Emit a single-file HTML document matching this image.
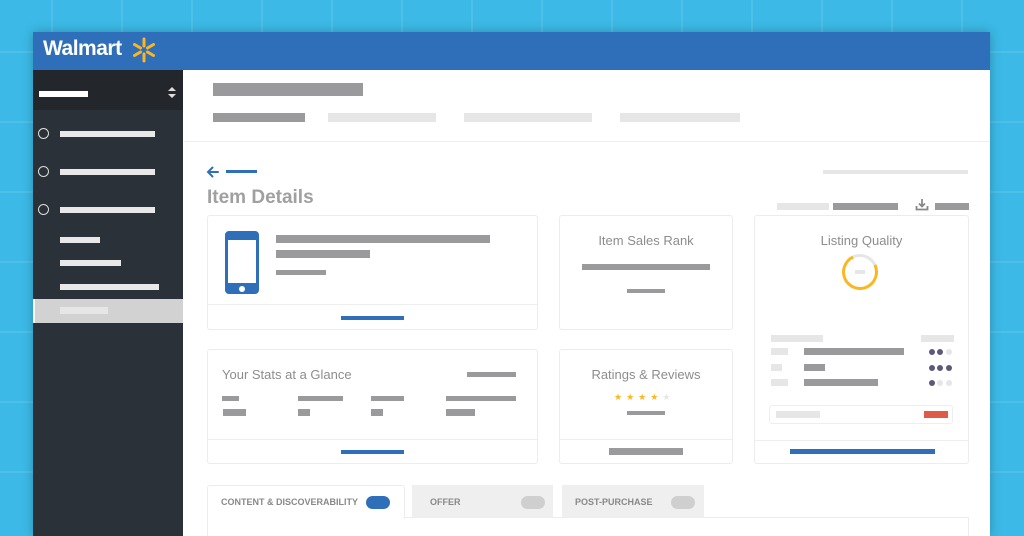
<html><head><style>
*{margin:0;padding:0;box-sizing:border-box}
body{width:1024px;height:536px;overflow:hidden;position:relative;font-family:"Liberation Sans",sans-serif;
background-color:#3cb9e6;
background-image:linear-gradient(90deg,rgba(255,255,255,.09) 2px,transparent 2px),linear-gradient(rgba(255,255,255,.09) 2px,transparent 2px);
background-size:70px 70px;background-position:51px 51px}
.a{position:absolute}
.g{position:absolute;background:#9a9a9d;height:7px}
.l{position:absolute;background:#e6e6e6;height:7px}
.w{position:absolute;background:#e8e8e8;height:6px}
.card{position:absolute;background:#fff;border:1px solid #ececec;border-radius:3px}
.t{position:absolute;color:#8d8d8f;font-size:13px;white-space:nowrap}
.d{position:absolute;width:6px;height:6px;border-radius:50%}
</style></head><body>
<div class="a" style="left:33px;top:32px;width:957px;height:504px;background:#fff;box-shadow:0 0 10px rgba(0,0,0,.25)"></div>
<div class="a" style="left:33px;top:32px;width:957px;height:38px;background:#2f6fba"></div>
<div class="a" style="left:43px;top:37px;color:#fff;font-size:21px;font-weight:bold;letter-spacing:-0.5px">Walmart</div>
<svg class="a" style="left:130px;top:36px" width="28" height="28" viewBox="-14 -14 28 28"><g stroke="#fcb620" stroke-width="3" stroke-linecap="round">
<line x1="0" y1="-4" x2="0" y2="-11"/><line x1="0" y1="4" x2="0" y2="11"/>
<line x1="3.5" y1="-2" x2="9.5" y2="-5.5"/><line x1="-3.5" y1="-2" x2="-9.5" y2="-5.5"/>
<line x1="3.5" y1="2" x2="9.5" y2="5.5"/><line x1="-3.5" y1="2" x2="-9.5" y2="5.5"/></g></svg>
<!-- sidebar -->
<div class="a" style="left:33px;top:70px;width:150px;height:466px;background:#2b3138"></div>
<div class="a" style="left:33px;top:70px;width:150px;height:40px;background:#23272b"></div>
<div class="a" style="left:39px;top:91px;width:49px;height:6px;background:#fff"></div>
<div class="a" style="left:168px;top:87px;width:0;height:0;border:4px solid transparent;border-bottom:4px solid #ddd;border-top:0"></div>
<div class="a" style="left:168px;top:94px;width:0;height:0;border:4px solid transparent;border-top:4px solid #ddd;border-bottom:0"></div>
<div class="a" style="left:38px;top:128px;width:11px;height:11px;border:1.5px solid #ddd;border-radius:50%"></div>
<div class="w" style="left:60px;top:131px;width:95px"></div>
<div class="a" style="left:38px;top:166px;width:11px;height:11px;border:1.5px solid #ddd;border-radius:50%"></div>
<div class="w" style="left:60px;top:169px;width:95px"></div>
<div class="a" style="left:38px;top:204px;width:11px;height:11px;border:1.5px solid #ddd;border-radius:50%"></div>
<div class="w" style="left:60px;top:207px;width:95px"></div>
<div class="w" style="left:60px;top:237px;width:40px"></div>
<div class="w" style="left:60px;top:260px;width:61px"></div>
<div class="w" style="left:60px;top:284px;width:99px"></div>
<div class="a" style="left:33px;top:299px;width:150px;height:24px;background:#d2d2d2;border-left:2px solid #fff"></div>
<div class="a" style="left:60px;top:307px;width:48px;height:7px;background:#e6e6e6"></div>
<!-- top -->
<div class="g" style="left:213px;top:83px;width:150px;height:13px"></div>
<div class="g" style="left:213px;top:113px;width:92px;height:9px"></div>
<div class="l" style="left:328px;top:113px;width:108px;height:9px"></div>
<div class="l" style="left:464px;top:113px;width:128px;height:9px"></div>
<div class="l" style="left:620px;top:113px;width:120px;height:9px"></div>
<div class="a" style="left:184px;top:141px;width:806px;height:1px;background:#eee"></div>
<svg class="a" style="left:206px;top:165px" width="14" height="14" viewBox="0 0 14 14"><path d="M12 7H2M6.5 2.5L2 7l4.5 4.5" stroke="#2f6fba" stroke-width="2" fill="none" stroke-linecap="round"/></svg>
<div class="a" style="left:226px;top:170px;width:31px;height:3px;background:#2f6fba"></div>
<div class="t" style="left:207px;top:187px;font-size:19px;font-weight:bold;color:#a0a0a2">Item Details</div>
<div class="l" style="left:823px;top:170px;width:145px;height:4px"></div>
<div class="l" style="left:777px;top:203px;width:52px"></div>
<div class="g" style="left:833px;top:203px;width:65px"></div>
<svg class="a" style="left:915px;top:198px" width="14" height="13" viewBox="0 0 14 13"><path d="M7 1v7M4 5.5L7 8.5 10 5.5M1.5 8v3.5h11V8" stroke="#888" stroke-width="1.8" fill="none"/></svg>
<div class="g" style="left:935px;top:203px;width:34px"></div>
<!-- card1 -->
<div class="card" style="left:207px;top:215px;width:331px;height:115px"></div>
<div class="a" style="left:208px;top:304px;width:329px;height:1px;background:#eee"></div>
<div class="a" style="left:225px;top:231px;width:34px;height:63px;border:3px solid #2f6fba;border-top-width:9px;border-bottom-width:11px;border-radius:4px;background:#fff"></div>
<div class="a" style="left:239px;top:286px;width:6px;height:6px;border-radius:50%;background:#fff"></div>
<div class="g" style="left:276px;top:235px;width:214px;height:8px"></div>
<div class="g" style="left:276px;top:250px;width:94px;height:8px"></div>
<div class="g" style="left:276px;top:270px;width:50px;height:5px"></div>
<div class="a" style="left:341px;top:316px;width:63px;height:4px;background:#2f6fba"></div>
<!-- card2 -->
<div class="card" style="left:559px;top:215px;width:174px;height:115px"></div>
<div class="t" style="left:559px;top:233px;width:174px;text-align:center">Item Sales Rank</div>
<div class="g" style="left:582px;top:264px;width:128px;height:6px"></div>
<div class="g" style="left:627px;top:289px;width:38px;height:4px"></div>
<!-- card3 -->
<div class="card" style="left:754px;top:215px;width:215px;height:249px"></div>
<div class="t" style="left:754px;top:233px;width:215px;text-align:center">Listing Quality</div>
<div class="a" style="left:842px;top:254px;width:36px;height:36px;border:3px solid #fcb620;border-top-color:#e6e6e6;border-radius:50%;transform:rotate(20deg)"></div>
<div class="l" style="left:855px;top:270px;width:10px;height:4px"></div>
<div class="l" style="left:771px;top:335px;width:52px"></div>
<div class="l" style="left:921px;top:335px;width:33px"></div>
<div class="l" style="left:771px;top:348px;width:17px"></div><div class="g" style="left:804px;top:348px;width:100px"></div>
<div class="l" style="left:771px;top:364px;width:11px"></div><div class="g" style="left:804px;top:364px;width:21px"></div>
<div class="l" style="left:771px;top:379px;width:17px"></div><div class="g" style="left:804px;top:379px;width:74px"></div>
<div class="d" style="left:929px;top:349px;background:#5c5a7a"></div><div class="d" style="left:937px;top:349px;background:#5c5a7a"></div><div class="d" style="left:946px;top:349px;background:#e6e6e6"></div>
<div class="d" style="left:929px;top:365px;background:#5c5a7a"></div><div class="d" style="left:937px;top:365px;background:#5c5a7a"></div><div class="d" style="left:946px;top:365px;background:#5c5a7a"></div>
<div class="d" style="left:929px;top:380px;background:#5c5a7a"></div><div class="d" style="left:937px;top:380px;background:#e6e6e6"></div><div class="d" style="left:946px;top:380px;background:#e6e6e6"></div>
<div class="a" style="left:769px;top:405px;width:184px;height:19px;border:1px solid #eee;border-radius:3px"></div>
<div class="l" style="left:776px;top:411px;width:44px"></div>
<div class="a" style="left:924px;top:411px;width:24px;height:7px;background:#e05a4a"></div>
<div class="a" style="left:755px;top:440px;width:213px;height:1px;background:#eee"></div>
<div class="a" style="left:790px;top:449px;width:145px;height:5px;background:#2f6fba"></div>
<!-- card4 -->
<div class="card" style="left:207px;top:349px;width:331px;height:115px"></div>
<div class="a" style="left:208px;top:439px;width:329px;height:1px;background:#eee"></div>
<div class="t" style="left:222px;top:367px">Your Stats at a Glance</div>
<div class="g" style="left:467px;top:372px;width:49px;height:5px"></div>
<div class="g" style="left:222px;top:396px;width:17px;height:5px"></div>
<div class="g" style="left:223px;top:409px;width:23px;height:7px"></div>
<div class="g" style="left:298px;top:396px;width:45px;height:5px"></div>
<div class="g" style="left:298px;top:409px;width:12px;height:7px"></div>
<div class="g" style="left:371px;top:396px;width:33px;height:5px"></div>
<div class="g" style="left:371px;top:409px;width:12px;height:7px"></div>
<div class="g" style="left:446px;top:396px;width:70px;height:5px"></div>
<div class="g" style="left:446px;top:409px;width:29px;height:7px"></div>
<div class="a" style="left:341px;top:450px;width:63px;height:4px;background:#2f6fba"></div>
<!-- card5 -->
<div class="card" style="left:559px;top:349px;width:174px;height:115px"></div>
<div class="a" style="left:560px;top:439px;width:172px;height:1px;background:#eee"></div>
<div class="t" style="left:559px;top:367px;width:174px;text-align:center">Ratings &amp; Reviews</div>
<div class="t" style="left:614px;top:392px;font-size:9px;color:#fcb620;letter-spacing:4px">★★★★<span style="color:#e6e6e6">★</span></div>
<div class="g" style="left:627px;top:411px;width:38px;height:4px"></div>
<div class="g" style="left:609px;top:448px;width:74px;height:7px"></div>
<!-- tabs -->
<div class="a" style="left:207px;top:517px;width:762px;height:19px;border:1px solid #ececec;border-bottom:0"></div>
<div class="a" style="left:207px;top:485px;width:198px;height:34px;background:#fff;border:1px solid #ececec;border-bottom:0;border-radius:3px 3px 0 0"></div>
<div class="t" style="left:221px;top:497px;font-size:9px;color:#888;font-weight:bold">CONTENT &amp; DISCOVERABILITY</div>
<div class="a" style="left:366px;top:496px;width:24px;height:13px;border-radius:7px;background:#2f6fba"></div>
<div class="a" style="left:412px;top:485px;width:141px;height:32px;background:#efefef"></div>
<div class="t" style="left:430px;top:497px;font-size:9px;color:#888;font-weight:bold">OFFER</div>
<div class="a" style="left:521px;top:496px;width:24px;height:13px;border-radius:7px;background:#cfcfcf"></div>
<div class="a" style="left:562px;top:485px;width:142px;height:32px;background:#efefef"></div>
<div class="t" style="left:575px;top:497px;font-size:9px;color:#888;font-weight:bold">POST-PURCHASE</div>
<div class="a" style="left:671px;top:496px;width:24px;height:13px;border-radius:7px;background:#cfcfcf"></div>
</body></html>
